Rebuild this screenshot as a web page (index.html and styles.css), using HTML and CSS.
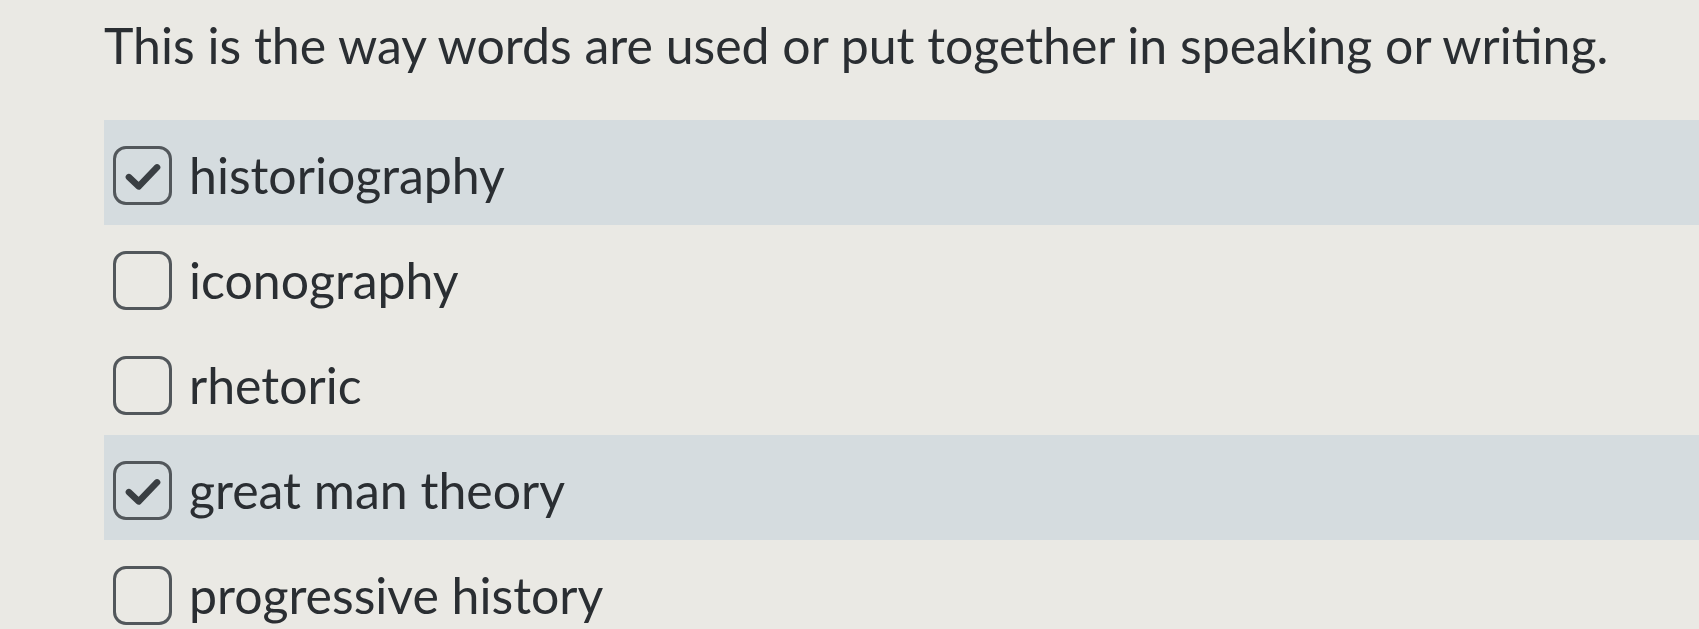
FILE: index.html
```html
<!DOCTYPE html>
<html>
<head>
  <meta charset="UTF-8">
  <title>Quiz question</title>
  <link rel="stylesheet" href="styles.css">
</head>
<body>

<div class="question">
  <h1 class="prompt">This is the way words are used or put together in speaking or writing.</h1>

  <div class="answers">
    <label class="answer selected">
      <span class="box checked">
        <svg viewBox="0 0 24 24"><path d="M5.5 12.5 L10 16.8 L18.5 8"/></svg>
      </span>
      <span class="text">historiography</span>
    </label>
    <label class="answer">
      <span class="box"></span>
      <span class="text">iconography</span>
    </label>
    <label class="answer">
      <span class="box"></span>
      <span class="text">rhetoric</span>
    </label>
    <label class="answer selected">
      <span class="box checked">
        <svg viewBox="0 0 24 24"><path d="M5.5 12.5 L10 16.8 L18.5 8"/></svg>
      </span>
      <span class="text">great man theory</span>
    </label>
    <label class="answer">
      <span class="box"></span>
      <span class="text">progressive history</span>
    </label>
  </div>
</div>

</body>
</html>
```

FILE: styles.css
```css
body {
  margin: 0;
  padding: 0;
  background: #eae9e4;
  font-family: Lato, "Liberation Sans", sans-serif;
  color: #2a2e32;
  overflow: hidden;
}

.question {
  padding: 15px 0 0 104px;
}

.prompt {
  margin: 0;
  font-size: 50px;
  font-weight: 400;
  line-height: 1.2;
  white-space: nowrap;
}

.answers {
  margin-top: 45px;
}

.answer {
  display: flex;
  align-items: center;
  gap: 17px;
  height: 105px;
  padding-left: 9px;
}

.answer.selected {
  background: #d5dcdf;
}

.box {
  width: 59px;
  height: 59px;
  margin-top: 6px;
  box-sizing: border-box;
  border: 3px solid #52575b;
  border-radius: 13px;
  display: flex;
  align-items: center;
  justify-content: center;
  flex-shrink: 0;
}

.box svg {
  width: 52px;
  height: 52px;
  fill: none;
  stroke: #3a3f43;
  stroke-width: 3;
  stroke-linecap: round;
  stroke-linejoin: round;
}

.text {
  font-size: 50px;
  line-height: 1.2;
  position: relative;
  top: 2px;
}
```
